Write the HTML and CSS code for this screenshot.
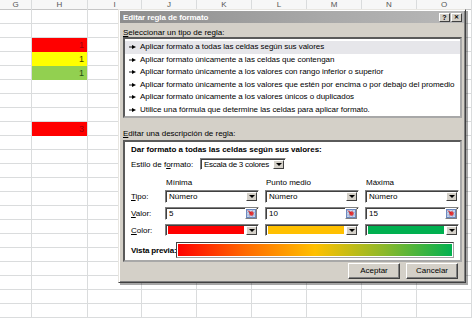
FILE: index.html
```html
<!DOCTYPE html>
<html lang="es">
<head>
<meta charset="utf-8">
<title>Editar regla de formato</title>
<link rel="stylesheet" href="styles.css">
</head>
<body>
<div class="sheet">
  <div class="col w-g"><div class="hdr">G</div><div class="body"></div></div>
  <div class="col w-h"><div class="hdr">H</div>
    <div class="body">
      <div class="cell"></div>
      <div class="cell"></div>
      <div class="cell c-red">1</div>
      <div class="cell c-yellow">1</div>
      <div class="cell c-green">1</div>
      <div class="cell"></div>
      <div class="cell"></div>
      <div class="cell"></div>
      <div class="cell c-red">3</div>
    </div>
  </div>
  <div class="col w-i"><div class="hdr">I</div><div class="body"></div></div>
  <div class="col"><div class="hdr">J</div><div class="body"></div></div>
  <div class="col"><div class="hdr">K</div><div class="body"></div></div>
  <div class="col"><div class="hdr">L</div><div class="body"></div></div>
  <div class="col"><div class="hdr">M</div><div class="body"></div></div>
  <div class="col"><div class="hdr">N</div><div class="body"></div></div>
  <div class="col"><div class="hdr">O</div><div class="body"></div></div>
</div>

<div class="dialog">
  <div class="titlebar">
    <span class="title">Editar regla de formato</span>
    <span class="tbtns"><span class="tbtn">?</span><span class="tbtn x">&#x2715;</span></span>
  </div>
  <div class="dbody">
    <div class="label"><u>S</u>eleccionar un tipo de regla:</div>
    <div class="listbox">
      <div class="item sel"><svg class="arr" viewBox="0 0 7 4" width="7" height="4"><path d="M0 2h3.5" stroke="#000" stroke-width="0.9"/><path d="M3 0l4 2-4 2z" fill="#000"/></svg>Aplicar formato a todas las celdas según sus valores</div>
      <div class="item"><svg class="arr" viewBox="0 0 7 4" width="7" height="4"><path d="M0 2h3.5" stroke="#000" stroke-width="0.9"/><path d="M3 0l4 2-4 2z" fill="#000"/></svg>Aplicar formato únicamente a las celdas que contengan</div>
      <div class="item"><svg class="arr" viewBox="0 0 7 4" width="7" height="4"><path d="M0 2h3.5" stroke="#000" stroke-width="0.9"/><path d="M3 0l4 2-4 2z" fill="#000"/></svg>Aplicar formato únicamente a los valores con rango inferior o superior</div>
      <div class="item"><svg class="arr" viewBox="0 0 7 4" width="7" height="4"><path d="M0 2h3.5" stroke="#000" stroke-width="0.9"/><path d="M3 0l4 2-4 2z" fill="#000"/></svg>Aplicar formato únicamente a los valores que estén por encima o por debajo del promedio</div>
      <div class="item"><svg class="arr" viewBox="0 0 7 4" width="7" height="4"><path d="M0 2h3.5" stroke="#000" stroke-width="0.9"/><path d="M3 0l4 2-4 2z" fill="#000"/></svg>Aplicar formato únicamente a los valores únicos o duplicados</div>
      <div class="item"><svg class="arr" viewBox="0 0 7 4" width="7" height="4"><path d="M0 2h3.5" stroke="#000" stroke-width="0.9"/><path d="M3 0l4 2-4 2z" fill="#000"/></svg>Utilice una fórmula que determine las celdas para aplicar formato.</div>
    </div>

    <div class="label label2"><u>E</u>ditar una descripción de regla:</div>
    <div class="desc">
      <div class="heading">Dar formato a todas las celdas según sus valores:</div>
      <div class="estilo">
        <span class="elabel">Estilo de f<u>o</u>rmato:</span>
        <div class="combo combo-estilo"><span class="ctext">Escala de 3 colores</span><span class="drop"><i></i></span></div>
      </div>
      <div class="grid">
        <span></span>
        <span class="colhead">Mínima</span>
        <span class="colhead">Punto medio</span>
        <span class="colhead">Máxima</span>

        <span class="rlabel"><u>T</u>ipo:</span>
        <div class="combo"><span class="ctext">Número</span><span class="drop"><i></i></span></div>
        <div class="combo"><span class="ctext">Número</span><span class="drop"><i></i></span></div>
        <div class="combo"><span class="ctext">Número</span><span class="drop"><i></i></span></div>

        <span class="rlabel"><u>V</u>alor:</span>
        <div class="combo"><span class="ctext">5</span><span class="pick"><svg viewBox="0 0 10 9" width="10" height="9"><rect x="0.5" y="0.5" width="9" height="8" fill="#c5d4ec" stroke="#6a86bd"/><path d="M0.5 3.5h9M0.5 6h9M3.5 0.5v8M6.5 0.5v8" stroke="#8ea6d2" stroke-width="0.6"/><circle cx="5.5" cy="4.5" r="2.2" fill="#e23a3a"/><path d="M2 1.5l3 3" stroke="#c00" stroke-width="1"/></svg></span></div>
        <div class="combo"><span class="ctext">10</span><span class="pick"><svg viewBox="0 0 10 9" width="10" height="9"><rect x="0.5" y="0.5" width="9" height="8" fill="#c5d4ec" stroke="#6a86bd"/><path d="M0.5 3.5h9M0.5 6h9M3.5 0.5v8M6.5 0.5v8" stroke="#8ea6d2" stroke-width="0.6"/><circle cx="5.5" cy="4.5" r="2.2" fill="#e23a3a"/><path d="M2 1.5l3 3" stroke="#c00" stroke-width="1"/></svg></span></div>
        <div class="combo"><span class="ctext">15</span><span class="pick"><svg viewBox="0 0 10 9" width="10" height="9"><rect x="0.5" y="0.5" width="9" height="8" fill="#c5d4ec" stroke="#6a86bd"/><path d="M0.5 3.5h9M0.5 6h9M3.5 0.5v8M6.5 0.5v8" stroke="#8ea6d2" stroke-width="0.6"/><circle cx="5.5" cy="4.5" r="2.2" fill="#e23a3a"/><path d="M2 1.5l3 3" stroke="#c00" stroke-width="1"/></svg></span></div>

        <span class="rlabel"><u>C</u>olor:</span>
        <div class="combo ccolor"><span class="swatch s-red"></span><span class="drop"><i></i></span></div>
        <div class="combo ccolor"><span class="swatch s-yellow"></span><span class="drop"><i></i></span></div>
        <div class="combo ccolor"><span class="swatch s-green"></span><span class="drop"><i></i></span></div>
      </div>
      <div class="preview">
        <span class="plabel">Vista previa:</span>
        <div class="pbar"></div>
      </div>
    </div>
    <div class="buttons">
      <span class="btn">Aceptar</span>
      <span class="btn">Cancelar</span>
    </div>
  </div>
</div>
</body>
</html>
```

FILE: styles.css
```css
* { box-sizing: border-box; }
html, body { margin: 0; padding: 0; }
body {
  width: 474px;
  height: 318px;
  overflow: hidden;
  position: relative;
  background: #fff;
  font-family: "Liberation Sans", Arial, sans-serif;
  font-size: 8px;
  color: #000;
}

/* spreadsheet */
.sheet { display: flex; height: 318px; }
.col {
  width: 55px;
  flex: none;
  display: flex;
  flex-direction: column;
  border-right: 1px solid #dadcdd;
}
.w-g { width: 32px; }
.w-h { width: 56px; }
.w-i { width: 54px; }
.hdr {
  height: 10px;
  line-height: 9px;
  text-align: center;
  font-size: 8px;
  color: #555;
  background: #f7f7f7;
  border-bottom: 1px solid #c6c6c6;
}
.body {
  flex: 1;
  background: repeating-linear-gradient(to bottom, transparent 0, transparent 13px, #dadcdd 13px, #dadcdd 14px);
}
.cell {
  height: 14px;
  line-height: 14px;
  text-align: right;
  padding-right: 3px;
  font-size: 9px;
}
.c-red { background: #ff0000; color: #a00010; }
.c-yellow { background: #ffff00; color: #3d3d00; }
.c-green { background: #92d050; color: #1e4d14; }

/* dialog */
.dialog {
  position: absolute;
  left: 118px;
  top: 9px;
  width: 348px;
  height: 274px;
  background: #d4d0c8;
  border: 1px solid;
  border-color: #e8e6e1 #404040 #404040 #e8e6e1;
  box-shadow: inset 1px 1px 0 #fff, inset -1px -1px 0 #808080, 2px 2px 0 rgba(0,0,0,0.35);
  padding: 1px;
}
.titlebar {
  height: 12px;
  display: flex;
  align-items: center;
  justify-content: space-between;
  background: linear-gradient(to right, #8d8d8d, #a9a9a9 60%, #b8b8b8);
  padding: 0 2px 0 3px;
}
.title {
  color: #fff;
  font-weight: bold;
  font-size: 8px;
  letter-spacing: -0.1px;
}
.tbtns { display: flex; gap: 1px; }
.tbtn {
  width: 11px;
  height: 9px;
  background: #d4d0c8;
  border: 1px solid;
  border-color: #fff #404040 #404040 #fff;
  font-size: 7px;
  font-weight: bold;
  line-height: 7px;
  text-align: center;
}
.tbtn.x { font-size: 6px; }

.dbody { padding: 0 2px 0 3px; }
.label { height: 9px; line-height: 9px; margin-top: 5px; }
.label2 { height: 10px; line-height: 10px; margin-top: 11px; margin-bottom: 1px; }

.listbox {
  height: 81px;
  background: #fff;
  border: 2px solid;
  border-color: #5a5a5a #a8a8a8 #a8a8a8 #5a5a5a;
  padding-top: 2px;
}
.item {
  height: 12.5px;
  line-height: 12.5px;
  display: flex;
  align-items: center;
  padding-left: 4px;
  white-space: nowrap;
  letter-spacing: -0.05px;
}
.item.sel { background: #e6e6ea; }
.arr { margin-right: 4px; flex: none; }

.desc {
  height: 122px;
  background: #fff;
  border: 2px solid;
  border-color: #5a5a5a #a8a8a8 #a8a8a8 #5a5a5a;
  padding: 3px 6px 0 6px;
}
.heading { font-weight: bold; height: 10px; line-height: 10px; }
.estilo { display: flex; align-items: center; margin-top: 3px; height: 12px; }
.elabel { width: 69px; white-space: nowrap; }
.combo {
  height: 13px;
  background: #fff;
  border: 1px solid;
  border-color: #808080 #fff #fff #808080;
  box-shadow: inset 1px 1px 0 #404040;
  display: flex;
  align-items: center;
  padding: 1px 1px 1px 3px;
}
.combo-estilo { width: 86px; height: 12px; }
.combo-estilo .ctext { letter-spacing: -0.25px; margin-right: 3px; }
.ctext { flex: 1; white-space: nowrap; overflow: hidden; }
.drop {
  width: 11px;
  height: 9px;
  flex: none;
  background: #d4d0c8;
  border: 1px solid;
  border-color: #fff #404040 #404040 #fff;
  display: flex;
  align-items: center;
  justify-content: center;
}
.drop i {
  width: 0; height: 0;
  border-left: 3px solid transparent;
  border-right: 3px solid transparent;
  border-top: 3px solid #000;
}
.pick {
  width: 12px;
  height: 11px;
  flex: none;
  background: #d4d0c8;
  border: 1px solid;
  border-color: #fff #808080 #808080 #fff;
  display: flex;
  align-items: center;
  justify-content: center;
}

.grid {
  display: grid;
  grid-template-columns: 28px 94px 94px 94px;
  column-gap: 6px;
  grid-template-rows: 10px 13px 13px 12px;
  row-gap: 4px;
  margin-top: 6px;
  align-items: center;
}
.grid .colhead { padding-left: 1px; line-height: 10px; margin-bottom: -3px; }
.ccolor { height: 12px; padding-left: 2px; }
.swatch {
  flex: 1;
  height: 8px;
  margin-right: 2px;
}
.s-red { background: #ff0000; }
.s-yellow { background: #ffc000; }
.s-green { background: #00b050; }

.preview { display: flex; align-items: center; margin-top: 6px; height: 16px; }
.plabel { font-weight: bold; width: 45px; flex: none; white-space: nowrap; letter-spacing: -0.15px; }
.pbar {
  width: 280px;
  height: 16px;
  border: 1px solid;
  border-color: #404040 #a0a0a0 #a0a0a0 #404040;
  box-shadow: inset 0 0 0 1px #fff;
  background: linear-gradient(to right, #ff0000 0%, #ff6a00 25%, #ffc000 50%, #8cb82a 75%, #00b050 100%);
}

.buttons {
  display: flex;
  justify-content: flex-end;
  gap: 6px;
  margin-top: 1px;
  padding-right: 4px;
}
.btn {
  height: 16px;
  width: 52px;
  line-height: 14px;
  text-align: center;
  background: #d4d0c8;
  border: 1px solid;
  border-color: #fff #404040 #404040 #fff;
  box-shadow: inset -1px -1px 0 #808080;
}
```
